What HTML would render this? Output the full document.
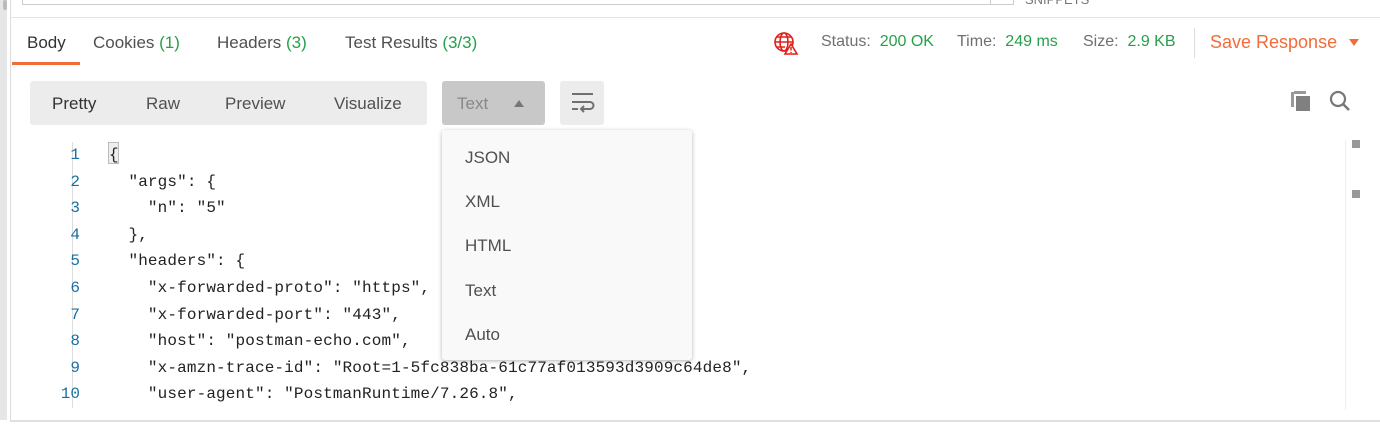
<!DOCTYPE html>
<html><head><style>
body{margin:0;width:1380px;height:428px;background:#fff;position:relative;overflow:hidden;font-family:"Liberation Sans",sans-serif;}
.a{position:absolute;}
.t{font-size:17px;color:#505050;}
.g{color:#26a04a;}
.code{font-family:"Liberation Mono",monospace;font-size:16px;color:#222;letter-spacing:0.13px;}
.ln{font-family:"Liberation Mono",monospace;font-size:16px;color:#1a6fa0;width:40px;text-align:right;}
.dd{font-size:17px;color:#505050;}
</style></head><body>
<div class="a" style="left:0;top:0;width:7px;height:420px;background:#e6e6e6"></div>
<div class="a" style="left:3px;top:0;width:4px;height:10px;background:#bbb;border-radius:2px"></div>
<div class="a" style="left:10px;top:0;width:1px;height:420px;background:#ddd"></div>
<div class="a" style="left:22px;top:-2px;width:990px;height:6px;border:1px solid #ccc;border-top:none"></div>
<div class="a" style="left:990px;top:0;width:1px;height:4px;background:#ccc"></div>
<div class="a" style="left:1025px;top:-8px;font-size:13px;color:#777">SNIPPETS</div>
<div class="a" style="left:10px;top:17px;width:1370px;height:1px;background:#e4e4e4"></div>
<div class="a t" style="left:27px;top:33px;color:#333">Body</div>
<div class="a" style="left:12px;top:62px;width:68px;height:3px;background:#f26b3a"></div>
<div class="a t" style="left:93px;top:33px">Cookies <span class="g">(1)</span></div>
<div class="a t" style="left:217px;top:33px">Headers <span class="g">(3)</span></div>
<div class="a t" style="left:345px;top:33px">Test Results <span class="g">(3/3)</span></div>
<svg class="a" style="left:773px;top:31px" width="26" height="24" viewBox="0 0 26 24"><g fill="none" stroke="#e0201a" stroke-width="1.6"><circle cx="11" cy="11" r="9"/><ellipse cx="11" cy="11" rx="4" ry="9"/><path d="M2 11h18M4 6h14M4 16h8"/></g><path d="M18 13l6 10h-12z" fill="#fff" stroke="#e0201a" stroke-width="1.6"/><path d="M18 16v3.5M18 21v1" stroke="#e0201a" stroke-width="1.5"/></svg>
<div class="a t" style="left:821px;top:33px;font-size:16px;color:#707070">Status:&nbsp; <span class="g">200 OK</span></div>
<div class="a t" style="left:957px;top:33px;font-size:16px;color:#707070">Time:&nbsp; <span class="g">249 ms</span></div>
<div class="a t" style="left:1083px;top:33px;font-size:16px;color:#707070">Size:&nbsp; <span class="g">2.9 KB</span></div>
<div class="a" style="left:1194px;top:28px;width:1px;height:30px;background:#ddd"></div>
<div class="a" style="left:1210px;top:32px;font-size:18px;color:#f26b3a">Save Response</div>
<div class="a" style="left:1349px;top:39px;width:0;height:0;border-left:5px solid transparent;border-right:5px solid transparent;border-top:7px solid #f26b3a"></div>
<div class="a" style="left:30px;top:81px;width:397px;height:44px;background:#ececec;border-radius:3px"></div>
<div class="a t" style="left:52px;top:94px;color:#333">Pretty</div>
<div class="a t" style="left:146px;top:94px">Raw</div>
<div class="a t" style="left:225px;top:94px">Preview</div>
<div class="a t" style="left:334px;top:94px">Visualize</div>
<div class="a" style="left:442px;top:81px;width:103px;height:44px;background:#c8c8c8;border-radius:3px"></div>
<div class="a t" style="left:457px;top:94px;color:#888">Text</div>
<div class="a" style="left:514px;top:100px;width:0;height:0;border-left:5px solid transparent;border-right:5px solid transparent;border-bottom:7px solid #777"></div>
<div class="a" style="left:560px;top:81px;width:44px;height:44px;background:#ececec;border-radius:3px"></div>
<svg class="a" style="left:570px;top:91px" width="26" height="24" viewBox="0 0 26 24"><g stroke="#707070" stroke-width="2" fill="none"><path d="M2 3h21M2 11h18a3.5 3.5 0 0 1 0 7h-8M2 18h6"/><path d="M14 15l-3 3 3 3"/></g></svg>
<svg class="a" style="left:1290px;top:90px" width="22" height="22" viewBox="0 0 22 22"><path d="M1 2h3v15h-3z M4 1h12v3h-12z" fill="#999"/><rect x="6" y="6" width="14" height="15" fill="#808080"/></svg>
<svg class="a" style="left:1328px;top:89px" width="24" height="24" viewBox="0 0 24 24"><circle cx="10" cy="10" r="7" fill="none" stroke="#777" stroke-width="2.2"/><path d="M15 15l6 6" stroke="#777" stroke-width="2.5"/></svg>
<div class="a" style="left:1345px;top:140px;width:1px;height:270px;background:#eee"></div>
<div class="a" style="left:1352px;top:140px;width:8px;height:8px;background:#999"></div>
<div class="a" style="left:1352px;top:190px;width:8px;height:8px;background:#999"></div>
<div class="a" style="left:72px;top:142px;width:1px;height:266px;background:#ddd"></div>
<div class="a" style="left:108px;top:142px;width:11px;height:22px;border:1px solid #bbb;background:#eee;box-sizing:border-box"></div>
<div class="a" style="left:10px;top:420px;width:1370px;height:2px;background:#e0e0e0"></div>
<div class="a ln" style="left:40px;top:142px;line-height:26.6px">1<br>2<br>3<br>4<br>5<br>6<br>7<br>8<br>9<br>10</div>
<pre class="a code" style="left:109px;top:142px;margin:0;line-height:26.6px">{
  "args": {
    "n": "5"
  },
  "headers": {
    "x-forwarded-proto": "https",
    "x-forwarded-port": "443",
    "host": "postman-echo.com",
    "x-amzn-trace-id": "Root=1-5fc838ba-61c77af013593d3909c64de8",
    "user-agent": "PostmanRuntime/7.26.8",</pre>
<div class="a" style="left:442px;top:130px;width:250px;height:230px;background:#f9f9f9;border-radius:3px;box-shadow:0 1px 4px rgba(0,0,0,.3)"></div>
<div class="a dd" style="left:465px;top:148px">JSON</div>
<div class="a dd" style="left:465px;top:192px">XML</div>
<div class="a dd" style="left:465px;top:236px">HTML</div>
<div class="a dd" style="left:465px;top:281px">Text</div>
<div class="a dd" style="left:465px;top:325px">Auto</div>
</body></html>
